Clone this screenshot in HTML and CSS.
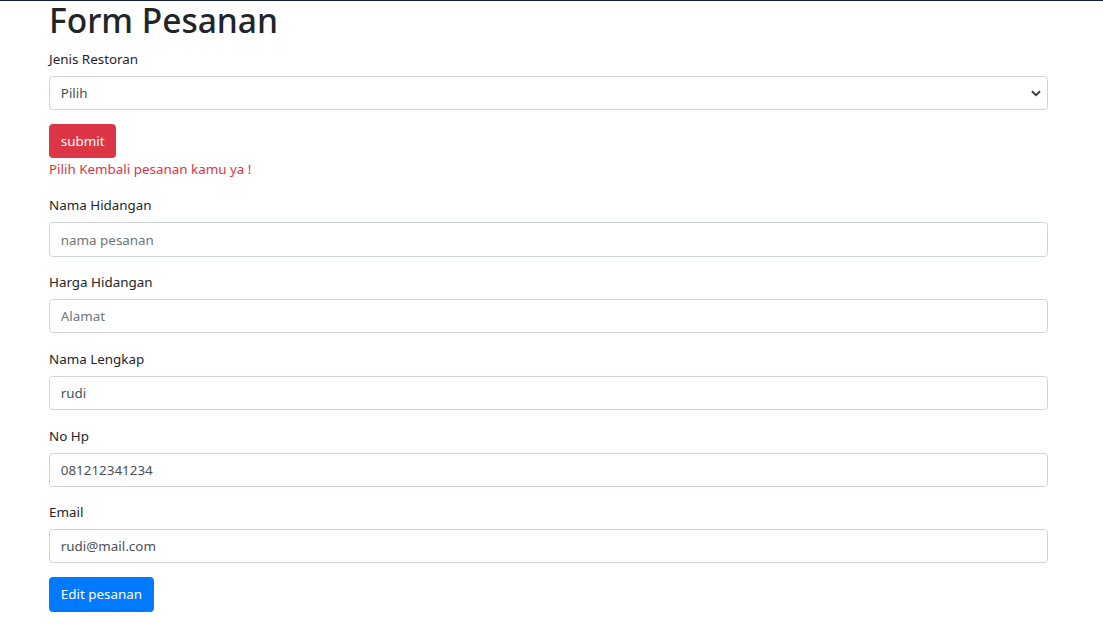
FILE: index.html
```html
<!DOCTYPE html>
<html>
<head>
<meta charset="utf-8">
<link rel="stylesheet" href="styles.css">
</head>
<body>
<div class="topbar"></div>
<div class="container">
  <h1 class="title">Form Pesanan</h1>
  <form class="form">
    <div class="group">
      <label class="label">Jenis Restoran</label>
      <div class="select-wrap">
        <select class="control select"><option>Pilih</option></select>
        <svg class="chevron" width="10" height="7" viewBox="0 0 10 7"><path d="M1 1.2 L5 5.2 L9 1.2" fill="none" stroke="#3c3f44" stroke-width="2"/></svg>
      </div>
    </div>
    <button type="button" class="btn btn-danger">submit</button>
    <div class="error">Pilih Kembali pesanan kamu ya !</div>
    <div class="group">
      <label class="label">Nama Hidangan</label>
      <input class="control" placeholder="nama pesanan">
    </div>
    <div class="group">
      <label class="label">Harga Hidangan</label>
      <input class="control" placeholder="Alamat">
    </div>
    <div class="group">
      <label class="label">Nama Lengkap</label>
      <input class="control" value="rudi">
    </div>
    <div class="group">
      <label class="label">No Hp</label>
      <input class="control" value="081212341234">
    </div>
    <div class="group">
      <label class="label">Email</label>
      <input class="control" value="rudi@mail.com">
    </div>
    <button type="button" class="btn btn-primary">Edit pesanan</button>
  </form>
</div>
</body>
</html>
```
FILE: styles.css
```css
* { box-sizing: border-box; }
html, body { margin: 0; padding: 0; }
body {
  font-family: "Noto Sans", "Open Sans", sans-serif;
  font-size: 13.4px;
  line-height: 21px;
  color: #212529;
  background: #fff;
}
.topbar { height: 1px; background: #0e1f3d; }
.container { width: 999px; margin-left: 49px; }
.title {
  font-size: 33.5px;
  font-weight: 500;
  line-height: 39.6px;
  margin: 0 0 6.9px;
}
.group { margin-bottom: 14px; }
.label { display: block; padding-top: 1.5px; margin-bottom: 6px; line-height: 21px; }
.control {
  display: block;
  width: 100%;
  height: 34.2px;
  padding: 5px 10.8px;
  font: inherit;
  font-size: 13.4px;
  line-height: 22px;
  color: #495057;
  background: #fff;
  border: 1px solid #ced4da;
  border-radius: 3.6px;
  outline: none;
}
.control::placeholder { color: #6c757d; opacity: 1; }
.select-wrap { position: relative; }
.select { appearance: none; -webkit-appearance: none; padding-left: 10.8px; }
.chevron { position: absolute; right: 7px; top: 14px; pointer-events: none; }
.btn {
  display: block;
  height: 34.2px;
  padding: 5px 10.8px;
  font: inherit;
  font-size: 13.4px;
  line-height: 22px;
  color: #fff;
  border: 1px solid transparent;
  border-radius: 3.6px;
}
.btn-danger { background: #dc3545; border-color: #dc3545; }
.btn-primary { background: #007bff; border-color: #007bff; }
.error { color: #dc3545; padding-top: 1px; margin-bottom: 13px; line-height: 21.6px; }
```
